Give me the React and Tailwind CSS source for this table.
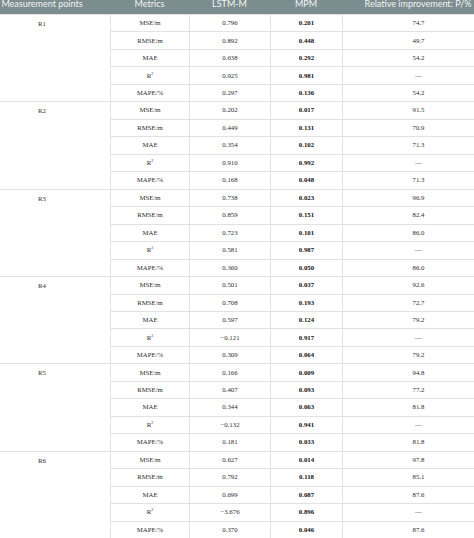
import React from "react";

const groups = [
  { name: "R1", rows: [["0.796", "0.201", "74.7"], ["0.892", "0.448", "49.7"], ["0.638", "0.292", "54.2"], ["0.925", "0.981", "—"], ["0.297", "0.136", "54.2"]] },
  { name: "R2", rows: [["0.202", "0.017", "91.5"], ["0.449", "0.131", "70.9"], ["0.354", "0.102", "71.3"], ["0.910", "0.992", "—"], ["0.168", "0.048", "71.3"]] },
  { name: "R3", rows: [["0.738", "0.023", "96.9"], ["0.859", "0.151", "82.4"], ["0.723", "0.101", "86.0"], ["0.581", "0.987", "—"], ["0.360", "0.050", "86.0"]] },
  { name: "R4", rows: [["0.501", "0.037", "92.6"], ["0.708", "0.193", "72.7"], ["0.597", "0.124", "79.2"], ["−0.121", "0.917", "—"], ["0.309", "0.064", "79.2"]] },
  { name: "R5", rows: [["0.166", "0.009", "94.8"], ["0.407", "0.093", "77.2"], ["0.344", "0.063", "81.8"], ["−0.132", "0.941", "—"], ["0.181", "0.033", "81.8"]] },
  { name: "R6", rows: [["0.627", "0.014", "97.8"], ["0.792", "0.118", "85.1"], ["0.699", "0.087", "87.6"], ["−3.676", "0.896", "—"], ["0.370", "0.046", "87.6"]] },
];

const metrics = [
  "MSE/m",
  "RMSE/m",
  "MAE",
  <>R<sup className="text-[4px] align-super">2</sup></>,
  "MAPE/%",
];

const headers = ["Measurement points", "Metrics", "LSTM-M", "MPM", "Relative improvement: P/%"];

const cell = "flex items-center justify-center border-t border-l border-[#e2e2e2]";

export default function App() {
  return (
    <div className="w-[474px] h-[538px] overflow-hidden bg-white">
      <div
        className="ml-[-26px] w-[520px] grid grid-cols-[136px_79px_81px_72px_152px] grid-rows-[14px_repeat(30,17.47px)] text-[6.8px] text-[#2e2e2e]"
        style={{ fontFamily: '"Liberation Serif", "Times New Roman", serif' }}
      >
        {/* HEADER */}
        {headers.map((h) => (
          <div
            key={h}
            className="bg-[#7b8d8e] text-[#f2f4f4] text-[9px] leading-[9px] text-center whitespace-nowrap overflow-hidden"
            style={{ fontFamily: "Lato, sans-serif" }}
          >
            <div className="-mt-[1px]">{h}</div>
          </div>
        ))}

        {/* BODY */}
        {groups.map((g) => (
          <React.Fragment key={g.name}>
            <div className="row-span-5 border-t border-[#e2e2e2] text-center pt-[4px]">{g.name}</div>
            {g.rows.map((r, i) => (
              <React.Fragment key={i}>
                <div className={cell}>{metrics[i]}</div>
                <div className={cell}>{r[0]}</div>
                <div className={`${cell} font-bold text-[#111]`}>{r[1]}</div>
                <div className={cell}>{r[2]}</div>
              </React.Fragment>
            ))}
          </React.Fragment>
        ))}
      </div>
    </div>
  );
}
